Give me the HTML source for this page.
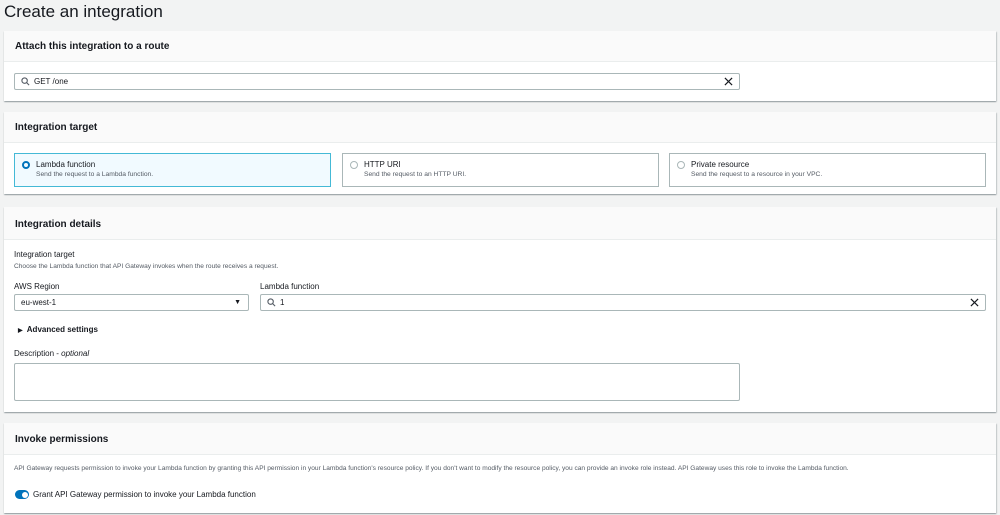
<!DOCTYPE html><html><head><style>
*{box-sizing:border-box;margin:0;padding:0}
body{width:1000px;height:515px;background:#f2f3f3;font-family:"Liberation Sans",sans-serif;color:#16191f;position:relative;overflow:hidden}
.abs{position:absolute}
.panel{position:absolute;left:4px;width:992px;background:#fff;box-shadow:0 1px 1px rgba(0,28,36,.3),1px 1px 1px rgba(0,28,36,.15);}
.hd{background:#fafafa;border-bottom:1px solid #eaeded;font-weight:bold;font-size:10px;padding-left:11px}
.inp{position:absolute;border:1px solid #aab7b8;border-radius:2px;background:#fff;height:17px;font-size:8px;line-height:15px}
.card{position:absolute;top:41px;width:317px;height:34px;border:1px solid #aab7b8;font-size:7.5px}
.card b{position:absolute;left:21px;top:6px;font-weight:normal;font-size:8px}
.card span{position:absolute;left:21px;top:17px;color:#545b64;font-size:6.7px}
.rad{position:absolute;left:7px;top:7px;width:8px;height:8px;border-radius:50%;border:1px solid #aab7b8}
.sm{font-size:8px}
</style></head><body>
<div class="abs" style="left:4px;top:2px;font-size:17px;">Create an integration</div>

<div class="panel" style="top:31px;height:70px">
<div class="hd" style="height:31px;line-height:32px">Attach this integration to a route</div>
<div class="inp" style="left:10px;top:42px;width:726px"><svg class="abs" style="left:6px;top:3px" width="9" height="9" viewBox="0 0 10 10"><circle cx="4" cy="4" r="3" fill="none" stroke="#545b64" stroke-width="1.2"/><path d="M6.3 6.3L9 9" stroke="#545b64" stroke-width="1.2"/></svg><span class="abs" style="left:19px">GET /one</span><svg class="abs" style="right:6px;top:3px" width="9" height="9" viewBox="0 0 10 10"><path d="M1 1L9 9M9 1L1 9" stroke="#16191f" stroke-width="1.3"/></svg></div>
</div>

<div class="panel" style="top:112px;height:82px">
<div class="hd" style="height:31px;line-height:32px">Integration target</div>
<div class="card" style="left:10px;border-color:#44b9d6;background:#f1faff"><div class="rad" style="border:2.5px solid #0073bb"></div><b>Lambda function</b><span>Send the request to a Lambda function.</span></div>
<div class="card" style="left:338px"><div class="rad"></div><b>HTTP URI</b><span>Send the request to an HTTP URI.</span></div>
<div class="card" style="left:665px"><div class="rad"></div><b>Private resource</b><span>Send the request to a resource in your VPC.</span></div>
</div>

<div class="panel" style="top:207px;height:205px">
<div class="hd" style="height:33px;line-height:35px">Integration details</div>
<div class="abs sm" style="left:10px;top:43px">Integration target</div>
<div class="abs" style="left:10px;top:56px;font-size:6.6px;color:#545b64">Choose the Lambda function that API Gateway invokes when the route receives a request.</div>
<div class="abs sm" style="left:10px;top:75px">AWS Region</div>
<div class="abs sm" style="left:256px;top:75px">Lambda function</div>
<div class="inp" style="left:10px;top:87px;width:235px"><span class="abs" style="left:6px">eu-west-1</span><span class="abs" style="right:7px;font-size:7px">▼</span></div>
<div class="inp" style="left:256px;top:87px;width:726px"><svg class="abs" style="left:6px;top:3px" width="9" height="9" viewBox="0 0 10 10"><circle cx="4" cy="4" r="3" fill="none" stroke="#545b64" stroke-width="1.2"/><path d="M6.3 6.3L9 9" stroke="#545b64" stroke-width="1.2"/></svg><span class="abs" style="left:19px">1</span><svg class="abs" style="right:6px;top:3px" width="9" height="9" viewBox="0 0 10 10"><path d="M1 1L9 9M9 1L1 9" stroke="#16191f" stroke-width="1.3"/></svg></div>
<div class="abs sm" style="left:14px;top:118px;font-weight:bold"><span style="font-size:6px">▶</span>&nbsp; Advanced settings</div>
<div class="abs sm" style="left:10px;top:142px">Description - <i>optional</i></div>
<div class="inp" style="left:10px;top:156px;width:726px;height:38px"></div>
</div>

<div class="panel" style="top:423px;height:90px">
<div class="hd" style="height:32px;line-height:34px">Invoke permissions</div>
<div class="abs" style="left:10px;top:42px;font-size:6.6px;color:#545b64;white-space:nowrap">API Gateway requests permission to invoke your Lambda function by granting this API permission in your Lambda function's resource policy. If you don't want to modify the resource policy, you can provide an invoke role instead. API Gateway uses this role to invoke the Lambda function.</div>
<div class="abs" style="left:11px;top:67px;width:14px;height:9px;border-radius:5px;background:#0073bb"><div class="abs" style="right:1.5px;top:1.5px;width:6px;height:6px;border-radius:50%;background:#fff"></div></div>
<div class="abs sm" style="left:29px;top:67px">Grant API Gateway permission to invoke your Lambda function</div>
</div>
</body></html>
